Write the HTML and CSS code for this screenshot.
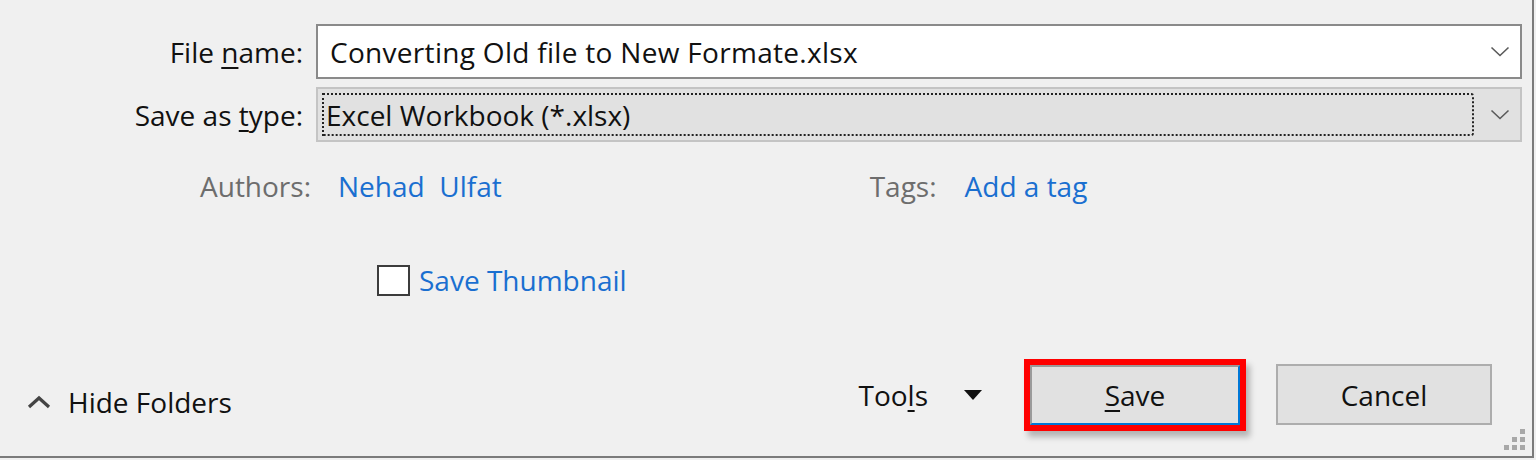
FILE: index.html
```html
<!DOCTYPE html>
<html>
<head>
<meta charset="utf-8">
<link rel="stylesheet" href="styles.css">
</head>
<body>
<div class="dialog">
  <div class="fields">
    <label class="label"><span>File <u>n</u>ame:</span></label>
    <div class="combo combo-edit">
      <span class="combo-text">Converting Old file to New Formate.xlsx</span>
      <svg class="chev" width="20" height="12" viewBox="0 0 20 12"><polyline points="1.5,1.5 10,9.5 18.5,1.5" fill="none" stroke="#5a5a5a" stroke-width="1.6"/></svg>
    </div>
    <label class="label"><span>Save as <u>t</u>ype:</span></label>
    <div class="combo combo-select">
      <span class="focus-rect"><span class="combo-text">Excel Workbook (*.xlsx)</span></span>
      <svg class="chev" width="20" height="12" viewBox="0 0 20 12"><polyline points="1.5,1.5 10,9.5 18.5,1.5" fill="none" stroke="#5a5a5a" stroke-width="1.6"/></svg>
    </div>
  </div>

  <div class="meta">
    <span class="meta-label">Authors:</span>
    <span class="link authors">Nehad&nbsp; Ulfat</span>
    <span class="meta-label tags-label">Tags:</span>
    <span class="link">Add a tag</span>
  </div>

  <div class="thumb">
    <span class="checkbox"></span>
    <span class="link">Save Thumbnail</span>
  </div>

  <div class="bottom">
    <div class="hide-folders">
      <svg width="24" height="14" viewBox="0 0 24 14"><polyline points="2,12 12,3 22,12" fill="none" stroke="#444" stroke-width="3.2"/></svg>
      <span>Hide Folders</span>
    </div>
    <div class="actions">
      <div class="tools">
        <span>Too<u>l</u>s</span>
        <svg width="18" height="10" viewBox="0 0 18 10"><polygon points="0,0 18,0 9,10" fill="#111"/></svg>
      </div>
      <button class="btn btn-save"><u>S</u>ave</button>
      <button class="btn">Cancel</button>
    </div>
  </div>

  <div class="gripper">
    <span></span><span></span><span></span><span></span><span></span><span></span>
  </div>
</div>
</body>
</html>
```

FILE: styles.css
```css
html, body {
  margin: 0;
  padding: 0;
  background: #f0f0f0;
}

.dialog {
  position: relative;
  box-sizing: border-box;
  width: 1534px;
  height: 458px;
  background: #f0f0f0;
  border-right: 2px solid #7b7b7b;
  border-bottom: 2px solid #7b7b7b;
  font-family: "Open Sans", "Noto Sans", sans-serif;
  font-size: 28px;
  color: #111;
  display: flex;
  flex-direction: column;
  padding-top: 24px;
}

u {
  text-decoration-thickness: 2px;
  text-underline-offset: 4px;
}

.fields {
  display: grid;
  grid-template-columns: 303px 1206px;
  grid-template-rows: 55px 55px;
  column-gap: 13px;
  row-gap: 8px;
}

.label {
  display: flex;
  align-items: center;
  justify-content: flex-end;
  white-space: nowrap;
}

.combo {
  box-sizing: border-box;
  display: flex;
  align-items: center;
  justify-content: space-between;
}

.combo-edit {
  background: #fff;
  border: 2px solid #8a8a8a;
  padding: 0 10px 0 12px;
}

.combo-edit .combo-text {
  letter-spacing: 0.3px;
}

.combo-select {
  background: #e1e1e1;
  border: 2px solid #c4c4c4;
  padding: 4px 10px 4px 4px;
}

.focus-rect {
  box-sizing: border-box;
  width: 1152px;
  height: 43px;
  border: 2px dotted #222;
  border-radius: 0 3px 3px 0;
  display: flex;
  align-items: center;
  padding-left: 2px;
}

.combo-text {
  white-space: nowrap;
}

.chev {
  flex: none;
}

.meta {
  display: flex;
  align-items: center;
  height: 40px;
  margin-top: 24px;
  padding-left: 200px;
  white-space: nowrap;
}

.meta-label {
  color: #6d6d6d;
}

.authors {
  margin-left: 27px;
}

.tags-label {
  margin-left: 368px;
  margin-right: 28px;
}

.link {
  color: #1a6fd0;
}

.thumb {
  display: flex;
  align-items: center;
  gap: 9px;
  margin-top: 55px;
  padding-left: 377px;
}

.checkbox {
  box-sizing: border-box;
  width: 33px;
  height: 31px;
  background: #fff;
  border: 2px solid #3c3c3c;
}

.bottom {
  display: flex;
  justify-content: space-between;
  align-items: center;
  margin-top: 65px;
  padding-left: 27px;
  padding-right: 40px;
}

.hide-folders {
  display: flex;
  align-items: center;
  gap: 17px;
  margin-top: 14px;
}

.actions {
  display: flex;
  align-items: center;
}

.tools {
  display: flex;
  align-items: center;
  gap: 36px;
  margin-right: 48px;
}

.btn {
  box-sizing: border-box;
  width: 216px;
  height: 61px;
  background: #e1e1e1;
  border: 2px solid #adadad;
  font-family: inherit;
  font-size: 28px;
  color: #111;
  padding: 0;
}

.btn-save {
  width: 210px;
  height: 60px;
  border: 2px solid #0078d7;
  border-top-color: #9a9a9a;
  border-left-color: #9a9a9a;
  outline: 6px solid #ff0000;
  box-shadow: 0 0 0 6px #ff0000, 4px 6px 6px 6px rgba(0, 0, 0, 0.25);
  margin-right: 36px;
}

.gripper {
  position: absolute;
  right: 4px;
  bottom: 3px;
  width: 24px;
  height: 24px;
  display: grid;
  grid-template-columns: repeat(3, 5px);
  grid-template-rows: repeat(3, 5px);
  gap: 3px;
}

.gripper span {
  background: #a8a8a8;
}
.gripper span:nth-child(1) { grid-column: 3; grid-row: 1; }
.gripper span:nth-child(2) { grid-column: 2; grid-row: 2; }
.gripper span:nth-child(3) { grid-column: 3; grid-row: 2; }
.gripper span:nth-child(4) { grid-column: 1; grid-row: 3; }
.gripper span:nth-child(5) { grid-column: 2; grid-row: 3; }
.gripper span:nth-child(6) { grid-column: 3; grid-row: 3; }
```
